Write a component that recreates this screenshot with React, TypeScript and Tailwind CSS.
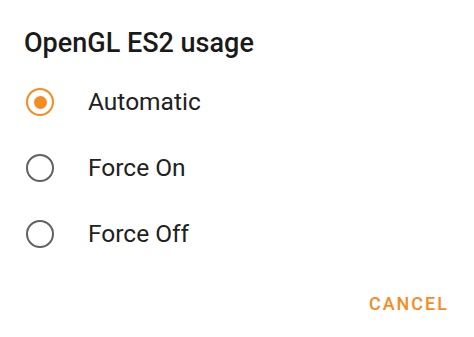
import React from "react";

const options = ["Automatic", "Force On", "Force Off"];

function Radio({ checked }: { checked: boolean }) {
  return checked ? (
    <div className="w-[28px] h-[28px] rounded-full border-[2.5px] border-[#f68b1f] flex items-center justify-center shrink-0">
      <div className="w-[13px] h-[13px] rounded-full bg-[#f68b1f]" />
    </div>
  ) : (
    <div className="w-[28px] h-[28px] rounded-full border-[2.5px] border-[#616161] shrink-0" />
  );
}

export default function App() {
  return (
    <div className="w-[474px] h-[337px] bg-white flex flex-col font-['Roboto',sans-serif]">
      <div className="pt-[27px] pl-[24px] text-[27px] leading-[32px] font-medium text-[#1a1a1a]">
        OpenGL ES2 usage
      </div>
      <div className="mt-[10px] flex flex-col">
        {options.map((o, i) => (
          <div key={o} className="h-[66px] flex items-center pl-[26px]">
            <Radio checked={i === 0} />
            <span className="ml-[34px] text-[24.5px] leading-[66px] text-[#212121]">{o}</span>
          </div>
        ))}
      </div>
      <div className="mt-[18px] flex justify-end pr-[25px]">
        <div className="h-[36px] flex items-center text-[18px] font-medium tracking-[2px] text-[#f68b1f]">
          CANCEL
        </div>
      </div>
    </div>
  );
}
